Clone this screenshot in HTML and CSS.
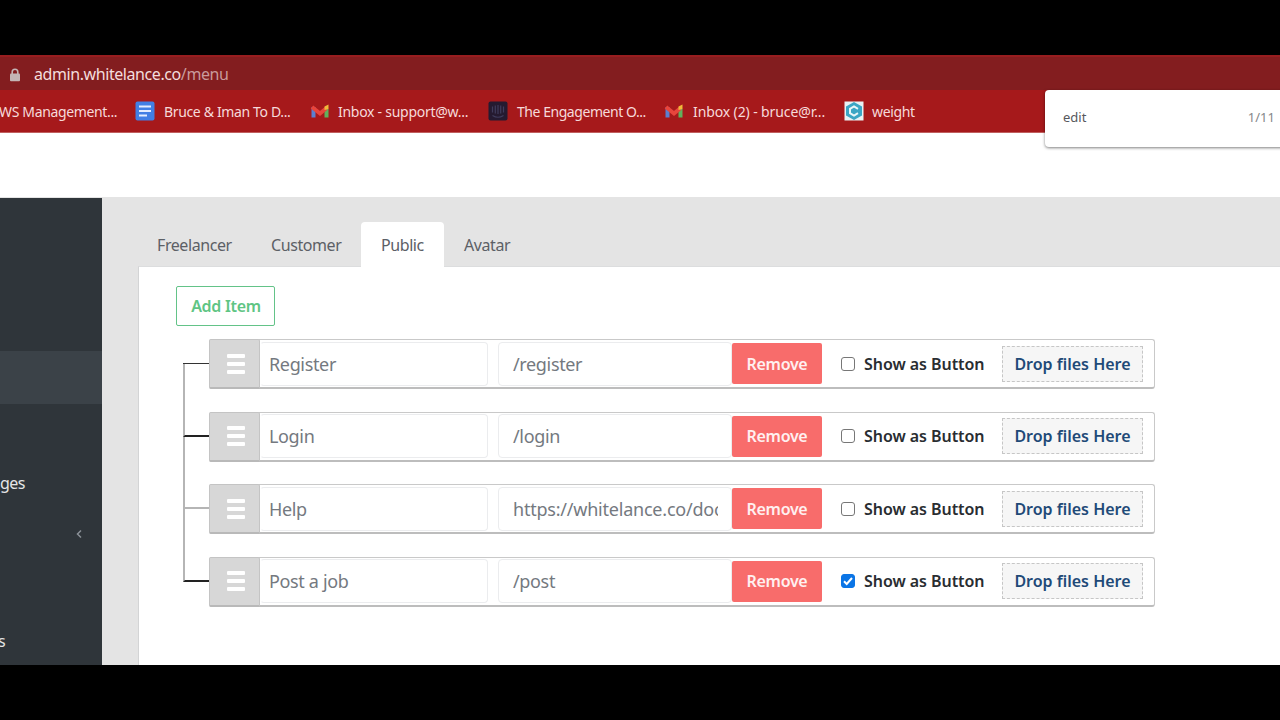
FILE: index.html
```html
<!DOCTYPE html>
<html lang="en">
<head>
  <meta charset="UTF-8">
  <title>Menu</title>
  <link rel="stylesheet" href="styles.css">
</head>
<body>

  <div class="browser">
    <div class="address-bar">
      <svg class="lock" width="12" height="14" viewBox="0 0 12 14"><path d="M3.2 6V4a2.8 2.8 0 0 1 5.6 0v2" fill="none" stroke="#c4b5b5" stroke-width="1.6"/><rect x="1" y="5.5" width="10" height="7.8" rx="1" fill="#c4b5b5"/></svg>
      <span class="url">admin.whitelance.co<span class="path">/menu</span></span>
    </div>

    <div class="bookmarks">
      <div class="bookmark aws"><span>WS Management...</span></div>
      <div class="bookmark todo">
        <svg width="20" height="20" viewBox="0 0 20 20"><rect x=".5" y=".5" width="19" height="19" rx="2" fill="#427fe5"/><path d="M4 5.500h12M4 10h12M4 14.500h8" stroke="#e4edff" stroke-width="2"/></svg>
        <span>Bruce &amp; Iman To D...</span>
      </div>
      <div class="bookmark support">
        <svg width="20" height="20" viewBox="0 0 20 20"><path d="M3.500 16.500V6" stroke="#5b7fd0" stroke-width="4"/><path d="M16.500 16.500V8" stroke="#62b05c" stroke-width="4"/><path d="M2 6l8 6.500 6-5" fill="none" stroke="#e8453c" stroke-width="4"/><path d="M14.500 9V5.500l4-2v4.500z" fill="#f0b93a"/></svg>
        <span>Inbox - support@w...</span>
      </div>
      <div class="bookmark engagement">
        <svg width="20" height="20" viewBox="0 0 20 20"><rect x=".5" y=".5" width="19" height="19" rx="2" fill="#251a30"/><path d="M4.500 5.500v6M7.300 4.500v8M10 4v9M12.700 4.500v8M15.500 5.500v6M4.500 14.500q5.500 3.500 11 0" fill="none" stroke="#403c5c" stroke-width="1.200"/></svg>
        <span>The Engagement O...</span>
      </div>
      <div class="bookmark bruce">
        <svg width="20" height="20" viewBox="0 0 20 20"><path d="M3.500 16.500V6" stroke="#5b7fd0" stroke-width="4"/><path d="M16.500 16.500V8" stroke="#62b05c" stroke-width="4"/><path d="M2 6l8 6.500 6-5" fill="none" stroke="#e8453c" stroke-width="4"/><path d="M14.500 9V5.500l4-2v4.500z" fill="#f0b93a"/></svg>
        <span>Inbox (2) - bruce@r...</span>
      </div>
      <div class="bookmark weight">
        <svg width="20" height="20" viewBox="0 0 20 20"><rect x=".5" y=".5" width="19" height="19" fill="#e9f1f4"/><path d="M10 1l8 4.500v9L10 19l-8-4.500v-9z" fill="#3ba5c4"/><path d="M14 7.800L10 5.500 6 7.800v4.400l4 2.300 4-2.300" fill="none" stroke="#e9f5f8" stroke-width="2"/></svg>
        <span>weight</span>
      </div>
    </div>

    <div class="find-box">
      <span class="find-text">edit</span>
      <span class="find-count">1/11</span>
    </div>
  </div>

  <div class="topbar"></div>

  <div class="page">
    <div class="sidebar">
      <div class="active"></div>
      <div class="side-item pages">ges</div>
      <div class="side-item arrow"><svg width="6" height="10" viewBox="0 0 6 10"><path d="M5 1.500L1.500 5 5 8.500" fill="none" stroke="#8b9298" stroke-width="1.500"/></svg></div>
      <div class="side-item last">s</div>
    </div>

    <div class="content">
      <div class="tabs">
        <div class="tab freelancer">Freelancer</div>
        <div class="tab customer">Customer</div>
        <div class="tab public">Public</div>
        <div class="tab avatar">Avatar</div>
      </div>

      <div class="panel">
        <button class="add">Add Item</button>

        <ul class="tree">
          <li class="node">
            <div class="branch"><div class="up"></div><div class="down"></div></div>
            <div class="row">
              <div class="handle"><i></i><i></i><i></i></div>
              <div class="field name"><span>Register</span></div>
              <div class="field link"><span>/register</span></div>
              <button class="remove">Remove</button>
              <span class="check"></span>
              <span class="label">Show as Button</span>
              <div class="drop">Drop files Here</div>
            </div>
          </li>
          <li class="node">
            <div class="branch dark"><div class="up"></div><div class="down"></div></div>
            <div class="row">
              <div class="handle"><i></i><i></i><i></i></div>
              <div class="field name"><span>Login</span></div>
              <div class="field link"><span>/login</span></div>
              <button class="remove">Remove</button>
              <span class="check"></span>
              <span class="label">Show as Button</span>
              <div class="drop">Drop files Here</div>
            </div>
          </li>
          <li class="node">
            <div class="branch light"><div class="up"></div><div class="down"></div></div>
            <div class="row">
              <div class="handle"><i></i><i></i><i></i></div>
              <div class="field name"><span>Help</span></div>
              <div class="field link"><span class="clip">https://whitelance.co/doc</span></div>
              <button class="remove">Remove</button>
              <span class="check"></span>
              <span class="label">Show as Button</span>
              <div class="drop">Drop files Here</div>
            </div>
          </li>
          <li class="node">
            <div class="branch dark"><div class="up"></div><div class="down"></div></div>
            <div class="row">
              <div class="handle"><i></i><i></i><i></i></div>
              <div class="field name"><span>Post a job</span></div>
              <div class="field link"><span>/post</span></div>
              <button class="remove">Remove</button>
              <span class="check checked"><svg width="12" height="12" viewBox="0 0 12 12"><path d="M2 6.300l2.700 2.700L10 3" fill="none" stroke="#fff" stroke-width="2"/></svg></span>
              <span class="label">Show as Button</span>
              <div class="drop">Drop files Here</div>
            </div>
          </li>
        </ul>
      </div>
    </div>
  </div>

</body>
</html>
```

FILE: styles.css
```css
* {
  box-sizing: border-box;
}

body {
  margin: 0;
  height: 720px;
  padding: 55px 0;
  background: #000;
  font-family: "Noto Sans", "Open Sans", sans-serif;
  overflow: hidden;
}

.browser {
  position: relative;
  height: 78px;
  background: #a6191b;
}

.address-bar {
  display: flex;
  align-items: center;
  height: 35px;
  padding: 2px 0 0 9px;
  background: #831d1f;
  border-top: 2px solid #981d1f;
}

.url {
  margin-left: 13px;
  margin-top: -1px;
  font-size: 16px;
  letter-spacing: -0.42px;
  color: #f3dddd;
}

.path {
  color: #c99a9b;
}

.bookmarks {
  display: flex;
  align-items: center;
  height: 43px;
  border-bottom: 1px solid #c0605f;
}

.bookmark {
  display: flex;
  align-items: center;
  height: 43px;
  font-size: 14px;
  letter-spacing: -0.35px;
  color: #f6dada;
  white-space: nowrap;
}

.bookmark svg {
  flex: none;
}

.bookmark span {
  margin-left: 9px;
}

.aws {
  width: 135px;
}

.aws span {
  margin-left: -1px;
}

.todo {
  width: 175px;
}

.support {
  width: 178px;
  letter-spacing: -0.27px;
}

.support span {
  margin-left: 8px;
}

.engagement {
  width: 176px;
  letter-spacing: -0.45px;
}

.bruce {
  width: 180px;
  letter-spacing: -0.11px;
}

.weight span {
  margin-left: 8px;
}

.find-box {
  position: absolute;
  top: 35px;
  left: 1045px;
  width: 245px;
  height: 57px;
  padding: 0 15px 3px 18px;
  display: flex;
  align-items: center;
  justify-content: space-between;
  background: #fff;
  border-radius: 4px;
  box-shadow: 0 1px 3px rgba(0, 0, 0, 0.5);
  font-size: 13px;
  color: #56585c;
}

.find-count {
  color: #85878a;
}

.topbar {
  height: 64px;
  background: #fff;
}

.page {
  display: flex;
  height: 468px;
  background: #e4e4e4;
}

.sidebar {
  width: 102px;
  height: 467px;
  margin-top: 1px;
  padding-top: 153px;
  background: #2f353a;
  color: #e4e5e6;
  font-size: 16px;
}

.active {
  height: 53px;
  background: #3b4248;
}

.side-item {
  height: 24px;
  line-height: 24px;
  letter-spacing: -0.5px;
}

.pages {
  margin-top: 67px;
}

.arrow {
  display: flex;
  align-items: center;
  margin-top: 27px;
  padding-left: 76px;
}

.last {
  margin-top: 83px;
  margin-left: -2px;
}

.content {
  width: 1178px;
  padding: 25px 0 0 36px;
}

.tabs {
  display: flex;
  height: 44px;
}

.tab {
  height: 44px;
  padding-left: 19px;
  line-height: 46px;
  font-size: 16px;
  letter-spacing: -0.42px;
  color: #5c6066;
  white-space: nowrap;
}

.freelancer {
  width: 114px;
}

.customer {
  width: 109px;
}

.public {
  position: relative;
  width: 83px;
  height: 45px;
  padding-left: 20px;
  background: #fff;
  border-radius: 4px 4px 0 0;
}

.avatar {
  padding-left: 20px;
}

.panel {
  height: 399px;
  padding: 19px 0 0 37px;
  background: #fff;
  border-left: 1px solid #d3d4d5;
  border-top: 1px solid #dcddde;
}

button {
  padding: 0;
  font-family: inherit;
  font-weight: 600;
  cursor: pointer;
}

.add {
  display: block;
  width: 99px;
  height: 40px;
  padding-left: 1px;
  border: 1px solid #63c388;
  border-radius: 2px;
  background: #fff;
  color: #5fc584;
  font-size: 16px;
  letter-spacing: -0.3px;
}

.tree {
  list-style: none;
  margin: 13px 0 0 7px;
  padding: 0;
}

.node {
  display: flex;
  height: 72.5px;
}

/* lines that join the items to the trunk */
.branch {
  width: 26px;
}

.up {
  height: 25px;
  border-left: 2px solid #b5b5b5;
  border-bottom: 1px solid #333;
}

.down {
  height: 47.5px;
  border-left: 2px solid #b5b5b5;
}

.dark .up {
  border-bottom: 2px solid #222;
}

.light .up {
  border-bottom: 2px solid #b5b5b5;
}

.node:first-child .up,
.node:last-child .down {
  border-left: 0;
}

.row {
  display: flex;
  align-items: center;
  width: 946px;
  height: 50px;
  border: 1px solid #c9c9c9;
  border-bottom: 2px solid #bdbdbd;
  border-left: 0;
  border-radius: 3px;
  background: #fff;
}

.handle {
  display: flex;
  flex-direction: column;
  align-items: center;
  justify-content: center;
  gap: 4px;
  width: 51px;
  height: 50px;
  margin: -1px 0 -2px;
  background: #d7d7d7;
  border: 1px solid #c4c4c4;
  border-bottom: 2px solid #b9b9b9;
  border-radius: 2px;
}

.handle i {
  width: 18px;
  height: 4px;
  margin-left: 2px;
  border-radius: 1px;
  background: #fff;
}

.field {
  display: flex;
  align-items: center;
  height: 44px;
  border: 1px solid #ebecee;
  border-radius: 4px;
  color: #747980;
  font-size: 18px;
  letter-spacing: -0.35px;
  white-space: nowrap;
}

.name {
  width: 228px;
  padding-left: 8px;
  border-left-color: #fff;
}

.link {
  width: 234px;
  margin-left: 10px;
  padding-left: 14px;
}

.clip {
  width: 205px;
  overflow: hidden;
  letter-spacing: -0.22px;
}

.remove {
  width: 90px;
  height: 41px;
  border: 0;
  border-radius: 2px;
  background: #f86c6b;
  color: #fff0f0;
  font-size: 16px;
  letter-spacing: -0.3px;
}

.check {
  display: flex;
  align-items: center;
  justify-content: center;
  width: 14px;
  height: 14px;
  margin-left: 19px;
  border: 1px solid #777;
  border-radius: 3px;
  background: #fff;
}

.checked {
  background: #0b75e6;
  border-color: #0b75e6;
}

.label {
  width: 147px;
  padding-left: 9px;
  font-size: 16px;
  font-weight: 600;
  letter-spacing: -0.05px;
  color: #292d31;
  white-space: nowrap;
}

.drop {
  width: 141px;
  height: 36px;
  line-height: 34px;
  text-align: center;
  border: 1px dashed #c6c6c6;
  background: #f6f6f6;
  color: #1f4a78;
  font-size: 16px;
  font-weight: 600;
  white-space: nowrap;
}
```
